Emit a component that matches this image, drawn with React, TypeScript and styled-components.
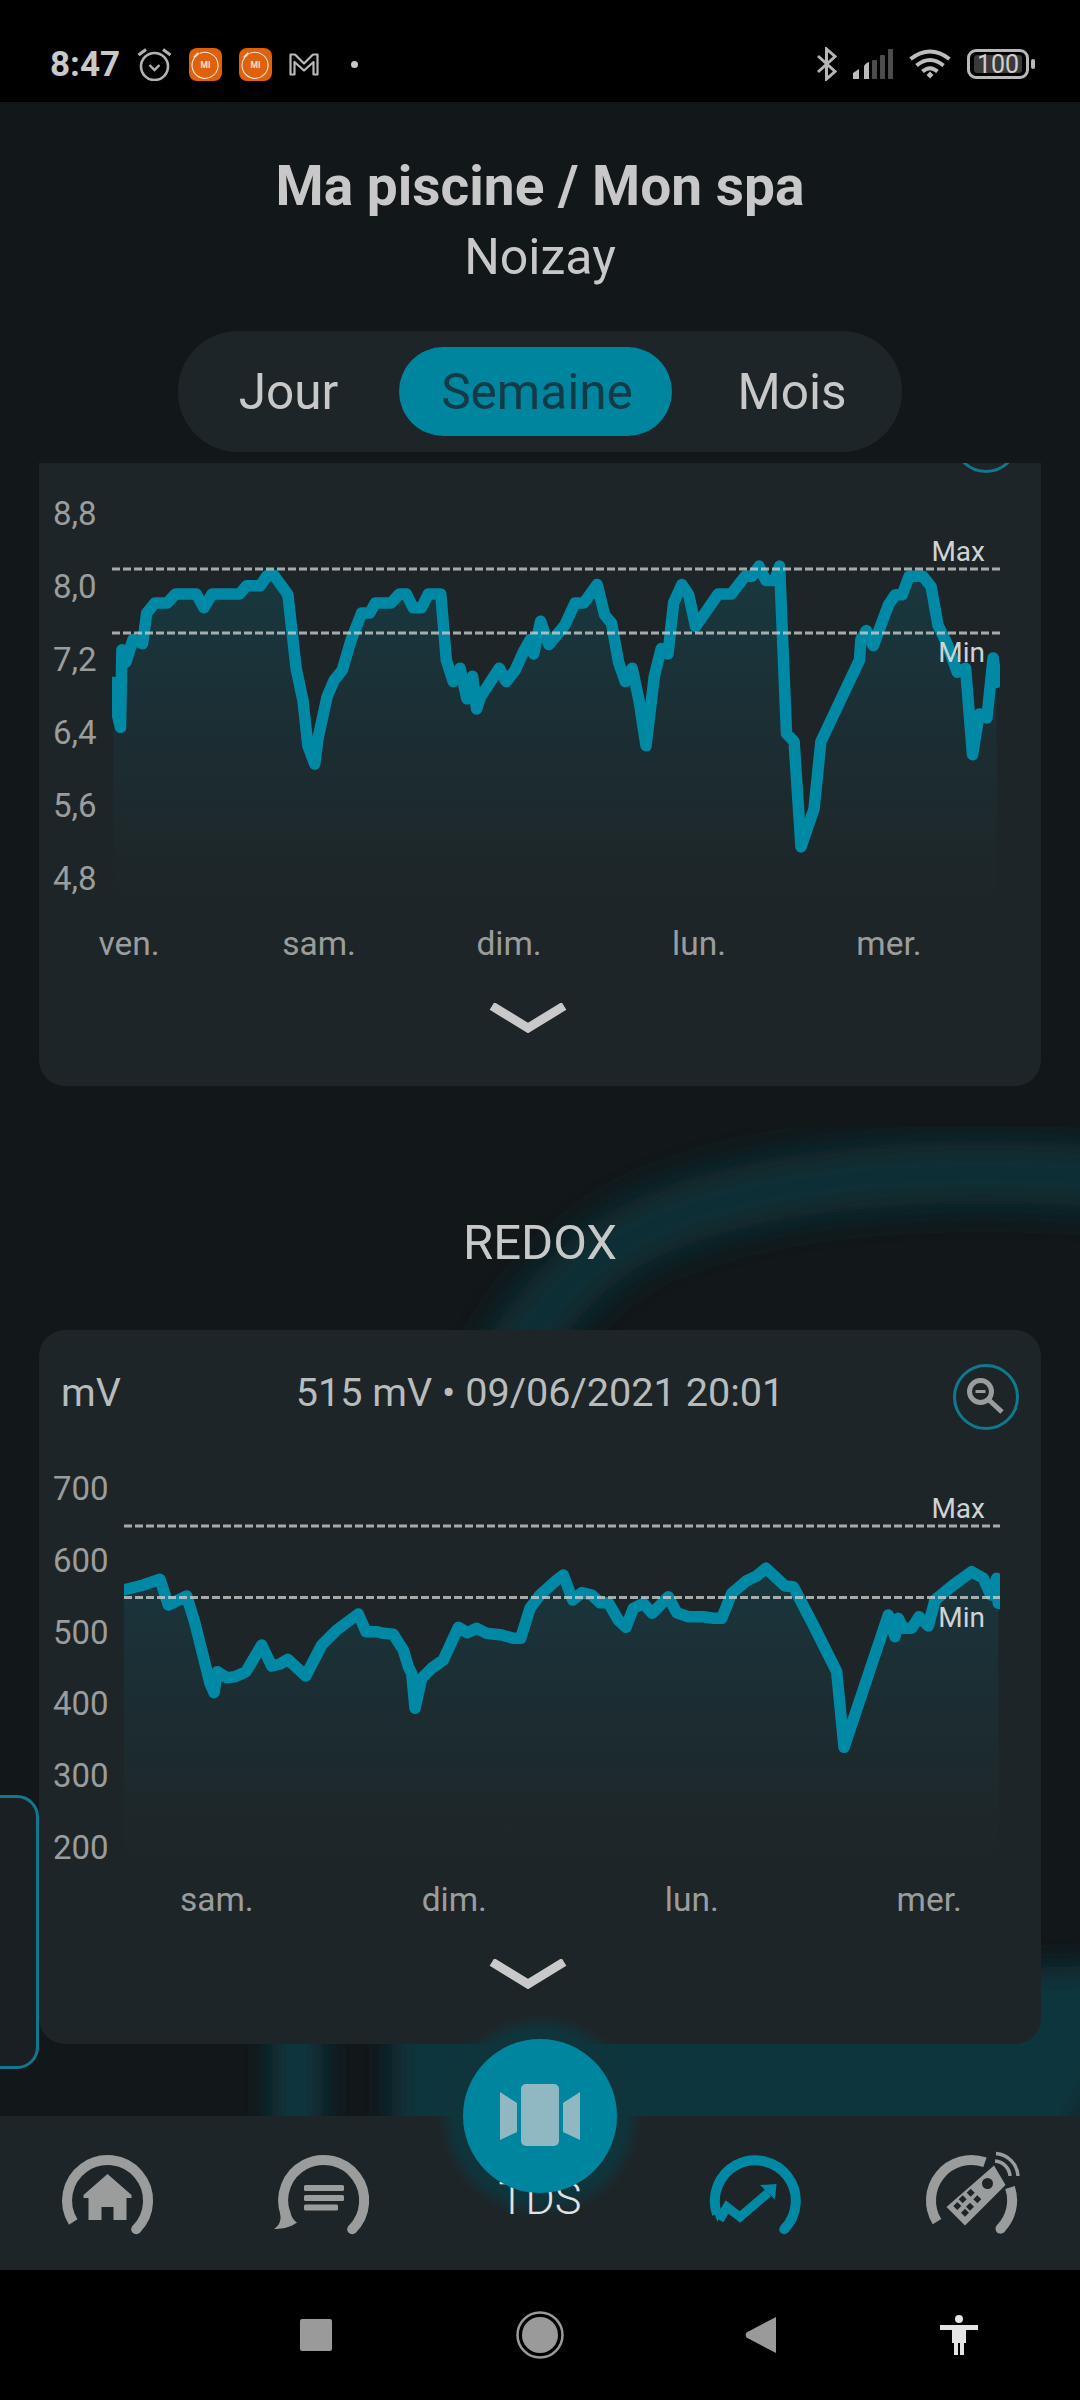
import React from "react";
import styled, { createGlobalStyle } from "styled-components";

const TEAL = "#00859f";
const CARD = "#1e2528";
const GREY = "#9b9d9d";
const FONT = `Roboto, "Liberation Sans", sans-serif`;

const Global = createGlobalStyle`
  html, body { margin: 0; padding: 0; background: #000; }
  body { font-family: ${FONT}; }
  * { box-sizing: border-box; }
`;

const Page = styled.div`
  width: 1080px;
  height: 2400px;
  display: flex;
  flex-direction: column;
  overflow: hidden;
  background: #000;
`;

/* ---------- status bar ---------- */
const StatusBar = styled.div`
  height: 102px;
  flex: none;
  background: #000;
  display: flex;
  align-items: center;
  justify-content: space-between;
  padding: 26px 45px 0 50px;
  color: #c9c9c9;
`;
const StatusGroup = styled.div<{ $gap: number }>`
  display: flex;
  align-items: center;
  gap: ${(p) => p.$gap}px;
`;
const Clock = styled.span`
  font-size: 35px;
  font-weight: 700;
  width: 70px;
`;
const Dot = styled.span`
  width: 7px;
  height: 7px;
  border-radius: 50%;
  background: #c9c9c9;
  margin-left: 15px;
`;

const AlarmIcon = () => (
  <svg width="35" height="34" viewBox="0 0 35 34" fill="none" stroke="#b3b3b3">
    <circle cx="17.5" cy="19.5" r="13.5" strokeWidth="2.6" />
    <path d="M1.5 8 L9 2.5 M33.5 8 L26 2.5" strokeWidth="3" />
    <path d="M12.5 18 L17.5 23 L22.5 18" strokeWidth="2.4" />
  </svg>
);
const MiIcon = () => (
  <svg width="33" height="33" viewBox="0 0 33 33">
    <rect width="33" height="33" rx="8" fill="#e0610d" />
    <path d="M10.5 5.6 A13 13 0 1 1 5.6 9.6" fill="none" stroke="#f6e3d5" strokeWidth="1.1" />
    <path d="M5 9.5 L9.5 5" stroke="#f6e3d5" strokeWidth="2.2" />
    <text x="16.5" y="20" textAnchor="middle" fontFamily={FONT} fontSize="8.5" fontWeight="700" fill="#f6e3d5">MI</text>
  </svg>
);
const MailIcon = () => (
  <svg width="30" height="23" viewBox="0 0 30 23" fill="none" stroke="#b8b8b8" strokeWidth="2.2" strokeLinejoin="round">
    <path d="M1.5 21.5 V1.5 H6 L15 10.5 L24 1.5 H28.5 V21.5 H24.5 V9 L15 17.5 L5.5 9 V21.5 Z" />
  </svg>
);
const BluetoothIcon = () => (
  <svg width="20" height="34" viewBox="0 0 20 34" fill="none" stroke="#b5b5b5" strokeWidth="3">
    <path d="M1 9 L18 24.5 L9.5 32 V2 L18 9.5 L1 25" />
  </svg>
);
const SignalIcon = () => (
  <svg width="40" height="30" viewBox="0 0 40 30">
    <path d="M0 30 V24 L6 20 V30 Z" fill="#bdbdbd" />
    <path d="M11 30 V18 Q11 15 16 13 V30 Z" fill="#bdbdbd" />
    <rect x="19" y="11" width="5" height="19" rx="1" fill="#4d4d4d" />
    <rect x="27" y="6" width="5" height="24" rx="1" fill="#4d4d4d" />
    <rect x="35" y="0" width="5" height="30" rx="1" fill="#4d4d4d" />
  </svg>
);
const WifiIcon = () => (
  <svg width="42" height="30" viewBox="0 0 42 30" fill="none" stroke="#bdbdbd" strokeWidth="4">
    <path d="M1.5 10 Q21 -5 40.5 10" />
    <path d="M7.5 16.5 Q21 5.5 34.5 16.5" />
    <path d="M13.5 22.5 Q21 16 28.5 22.5" />
    <path d="M17.5 26 L21 22.6 L24.5 26 L21 29.5 Z" fill="#bdbdbd" stroke="none" />
  </svg>
);
const Battery = styled.div`
  position: relative;
  width: 62px;
  height: 30px;
  margin-right: 6px;
  border: 3px solid #b9b9b9;
  border-radius: 9px;
  display: flex;
  align-items: center;
  justify-content: center;
  font-size: 25px;
  line-height: 1;
  color: #cfcfcf;
  &::before {
    content: "";
    position: absolute;
    inset: 3px 4px;
    border-radius: 3px;
    background: #3a3a3a;
  }
  &::after {
    content: "";
    position: absolute;
    right: -9px;
    top: 7px;
    width: 4px;
    height: 10px;
    border-radius: 2px;
    background: #b9b9b9;
  }
`;
const BatteryText = styled.span`
  position: relative;
`;

/* ---------- screen ---------- */
const Screen = styled.div`
  flex: 1;
  min-height: 0;
  position: relative;
  background: #12171a;
  display: flex;
  flex-direction: column;
`;
const Backdrop = styled.svg`
  position: absolute;
  left: 0;
  top: 0;
  pointer-events: none;
`;
const Header = styled.header`
  position: relative;
  flex: none;
  padding-top: 54px;
  text-align: center;
  color: #c8c8c8;
`;
const Title = styled.h1`
  margin: 0;
  font-size: 55px;
  line-height: 60px;
  font-weight: 700;
`;
const Subtitle = styled.div`
  margin-top: 11px;
  font-size: 50px;
  line-height: 60px;
  font-weight: 400;
`;
const Segmented = styled.div`
  width: 724px;
  height: 121px;
  margin: 44px auto 0;
  padding: 16px 0;
  border-radius: 60px;
  background: ${CARD};
  display: grid;
  grid-template-columns: 221px 273px 230px;
`;
const Segment = styled.div<{ $active?: boolean; $shift?: number }>`
  display: flex;
  align-items: center;
  justify-content: center;
  padding-left: ${(p) => p.$shift ?? 0}px;
  border-radius: 45px;
  font-size: 49.5px;
  color: ${(p) => (p.$active ? "#123a47" : "#c8c8c8")};
  background: ${(p) => (p.$active ? TEAL : "transparent")};
`;
const Scroll = styled.main`
  position: relative;
  flex: 1;
  min-height: 0;
  margin-top: 11px;
  overflow: hidden;
`;
const Card = styled.section<{ $pullUp?: number; $bottom: number }>`
  width: 1002px;
  margin: ${(p) => (p.$pullUp ? `-${p.$pullUp}px` : "0")} 0 0 39px;
  padding: 34px 22px ${(p) => p.$bottom}px 0;
  border-radius: 26px;
  background: ${CARD};
`;
const CardHead = styled.div`
  height: 64px;
  padding-left: 22px;
  display: grid;
  grid-template-columns: 1fr auto 1fr;
  align-items: center;
  font-size: 39.6px;
  color: #b9bcbd;
`;
const HeadText = styled.span`
  padding-bottom: 10px;
`;
const ZoomButton = styled.div`
  justify-self: end;
  width: 66px;
  height: 66px;
  border-radius: 50%;
  border: 3px solid #11788e;
  display: flex;
  align-items: center;
  justify-content: center;
`;
const ChartRow = styled.div`
  height: 420px;
  margin-top: 22px;
  padding-left: 14px;
  display: flex;
`;
const YAxis = styled.div<{ $top: number; $bottom: number }>`
  width: 47px;
  flex: none;
  padding: ${(p) => p.$top}px 0 ${(p) => p.$bottom}px;
  display: flex;
  flex-direction: column;
  justify-content: space-between;
  font-size: 33px;
  line-height: 40px;
  color: ${GREY};
  white-space: nowrap;
`;
const XAxis = styled.div<{ $start: number; $step: number; $top: number }>`
  margin: ${(p) => p.$top}px 0 0 ${(p) => p.$start}px;
  display: grid;
  grid-auto-flow: column;
  grid-auto-columns: ${(p) => p.$step}px;
  font-size: 33.5px;
  line-height: 40px;
  color: ${GREY};
  text-align: center;
`;
const Chevron = styled.svg`
  display: block;
  margin: 39px 0 0 450px;
`;
const SectionTitle = styled.h2`
  margin: 127px 0 57px;
  text-align: center;
  font-size: 49px;
  line-height: 60px;
  font-weight: 400;
  color: #c8c8c8;
`;
const SideTab = styled.div`
  position: absolute;
  left: -24px;
  top: 1693px;
  width: 63px;
  height: 274px;
  border: 3px solid #11788e;
  border-radius: 22px;
  background: #191f22;
`;

/* ---------- bottom nav ---------- */
const NavBar = styled.nav`
  position: relative;
  flex: none;
  height: 154px;
  padding-top: 34px;
  background: ${CARD};
  display: grid;
  grid-template-columns: repeat(5, 216px);
  justify-items: center;
  align-items: start;
`;
const NavGlow = styled.div`
  position: absolute;
  left: 438px;
  top: -102px;
  width: 204px;
  height: 204px;
  border-radius: 50%;
  background: radial-gradient(circle closest-side, #0f343c 0, #0f343c 84%, rgba(15, 52, 60, 0) 100%);
`;
const NavIcon = styled.svg`
  position: relative;
  display: block;
`;
const NavLabel = styled.span`
  position: relative;
  margin-top: 24px;
  font-size: 45px;
  font-weight: 300;
  line-height: 50px;
  color: #e2e2e2;
`;
const Fab = styled.div`
  position: absolute;
  left: 463px;
  top: -77px;
  width: 154px;
  height: 154px;
  border-radius: 50%;
  background: ${TEAL};
  display: flex;
  align-items: center;
  justify-content: center;
`;

/* ---------- system bar ---------- */
const SystemBar = styled.div`
  flex: none;
  height: 130px;
  background: #000;
  display: flex;
  align-items: center;
  padding: 0 0 0 300px;
`;
const SystemKey = styled.svg<{ $left?: number }>`
  display: block;
  margin-left: ${(p) => p.$left ?? 0}px;
`;

/* ---------- chart ---------- */
type Pt = [number, number];

const phRaw: Pt[] = [[165,545],[167,600],[175,655],[177,465],[183,495],[193,440],[207,450],[213,375],[225,350],[243,350],[255,328],[285,328],[296,362],[308,328],[348,328],[358,308],[378,308],[388,283],[398,283],[418,330],[430,510],[440,590],[447,700],[457,745],[462,680],[475,580],[485,540],[497,515],[510,440],[525,375],[537,375],[545,350],[568,350],[580,328],[590,328],[600,362],[612,362],[622,328],[640,328],[648,490],[658,543],[668,510],[678,585],[686,530],[692,610],[698,580],[725,510],[735,543],[748,515],[760,470],[770,440],[775,475],[785,395],[797,452],[820,405],[835,350],[848,350],[867,305],[878,380],[888,400],[898,495],[908,543],[918,510],[928,590],[938,700],[950,530],[960,462],[970,475],[978,350],[990,305],[1000,330],[1010,408],[1043,328],[1062,328],[1082,285],[1092,285],[1102,260],[1112,295],[1125,295],[1132,260],[1142,670],[1153,690],[1163,948],[1182,855],[1192,690],[1248,490],[1250,440],[1258,418],[1268,455],[1290,355],[1300,330],[1310,330],[1320,285],[1340,285],[1352,310],[1362,405],[1375,450],[1390,520],[1402,510],[1412,722],[1422,622],[1433,632],[1442,485],[1447,545]];
const phPoints: Pt[] = phRaw.map(([x, y]) => [x / 1.452, 460 + y / 2.45]);

const redoxA: Pt[] = [[40,120],[100,105],[150,88],[175,165],[230,138],[255,220],[285,340],[300,400],[312,428],[322,365],[350,383],[375,380],[408,365],[455,285],[485,348],[510,342],[533,328],[587,378],[635,285],[680,240],[745,192],[768,245],[800,245],[820,250],[850,253],[880,300],[895,350],[905,370],[915,475],[935,385],[965,355],[1000,330],[1045,232],[1072,248],[1100,235],[1130,250],[1175,255],[1210,265],[1232,265],[1260,175],[1290,135],[1340,90]];
const redoxB: Pt[] = [[10,75],[38,150],[65,128],[95,135],[120,158],[145,158],[175,210],[198,232],[220,175],[250,160],[277,190],[325,140],[350,188],[385,200],[430,200],[460,205],[485,205],[515,130],[560,92],[590,78],[618,55],[675,108],[700,110],[760,225],[830,365],[852,592],[985,195],[1005,260],[1015,205],[1030,235],[1055,235],[1077,200],[1105,228],[1125,150],[1180,105],[1235,65],[1270,85],[1292,135],[1310,85],[1315,160]];
const redoxPoints: Pt[] = [
  ...redoxA.map(([x, y]): Pt => [110 + x / 3, 1550 + y / 3]),
  ...redoxB.map(([x, y]): Pt => [560 + x / 3, 1550 + y / 3]),
];

const PLOT_W = 910;
const PLOT_H = 420;

function Plot(props: { id: string; points: Pt[]; top: number; left: number; maxY: number; minY: number; maxLabelY: number; minLabelY: number }) {
  const { id, points, top, left, maxY, minY, maxLabelY, minLabelY } = props;
  const pts = points.map(([x, y]) => [x - 100, y - top] as Pt);
  const line = pts.map(([x, y]) => `${x.toFixed(1)},${y.toFixed(1)}`).join(" ");
  const x0 = left - 100;
  const x1 = 900;
  const area = `M${pts[0][0].toFixed(1)} ${PLOT_H} L${line.replace(/ /g, " L")} L${pts[pts.length - 1][0].toFixed(1)} ${PLOT_H} Z`;
  const my = maxY - top;
  const ny = minY - top;
  return (
    <svg width={PLOT_W} height={PLOT_H} viewBox={`0 0 ${PLOT_W} ${PLOT_H}`} style={{ display: "block", flex: "none" }}>
      <defs>
        <linearGradient id={`${id}-fill`} gradientUnits="userSpaceOnUse" x1="0" y1={my} x2="0" y2={PLOT_H - 8}>
          <stop offset="0" stopColor={TEAL} stopOpacity="0.2" />
          <stop offset="0.5" stopColor={TEAL} stopOpacity="0.09" />
          <stop offset="1" stopColor={TEAL} stopOpacity="0" />
        </linearGradient>
        <clipPath id={`${id}-clip`}>
          <rect x={x0} y="0" width={x1 - x0} height={PLOT_H} />
        </clipPath>
      </defs>
      <g clipPath={`url(#${id}-clip)`}>
        <path d={area} fill={`url(#${id}-fill)`} />
        <polyline points={line} fill="none" stroke="#0089a5" strokeWidth="11.5" strokeLinejoin="round" strokeLinecap="round" />
      </g>
      <path d={`M${x0} ${my} H${x1} M${x0} ${ny} H${x1}`} stroke="#c9cccc" strokeOpacity="0.8" strokeWidth="3" strokeDasharray="8 3" />
      <text x="885" y={maxLabelY - top + 10} textAnchor="end" fontFamily={FONT} fontSize="28" fill="#d0d3d4">Max</text>
      <text x="885" y={minLabelY - top + 10} textAnchor="end" fontFamily={FONT} fontSize="28" fill="#d0d3d4">Min</text>
    </svg>
  );
}

const ChevronDown = () => (
  <Chevron width="78" height="30" viewBox="0 0 78 30" fill="none">
    <path d="M3 3 L39 25 L75 3" stroke="#c9c9c9" strokeWidth="9" strokeLinejoin="miter" />
  </Chevron>
);

const ZoomOutIcon = () => (
  <svg width="44" height="44" viewBox="0 0 44 44" fill="none" stroke="#9b9d9d">
    <circle cx="16.5" cy="16.5" r="11" strokeWidth="5" />
    <path d="M11.5 16.5 H21.5" strokeWidth="3" />
    <path d="M25 25 L38 37" strokeWidth="5" />
  </svg>
);

/* ---------- nav icons ---------- */
const Ring = ({ color, d, capX, capY }: { color: string; d: string; capX: number; capY: number }) => (
  <>
    <path d={d} fill="none" stroke={color} strokeWidth="10" />
    <circle cx={capX} cy={capY} r="5" fill={color} />
  </>
);

const HomeIcon = () => (
  <NavIcon width="100" height="85" viewBox="1 0 100 85">
    <Ring color={GREY} d="M16.2 72 A40.5 40.5 0 1 1 79.2 79.2" capX={79.2} capY={79.2} />
    <path fill={GREY} d="M50.5 24 L74.5 45 V48 H69.5 V70 H56.5 V57 H44.5 V70 H31.5 V48 H26.5 V45 Z" />
  </NavIcon>
);
const ChatIcon = () => (
  <NavIcon width="100" height="85" viewBox="1 0 100 85">
    <Ring color={GREY} d="M12.5 64 A40.5 40.5 0 1 1 79.2 79.2" capX={79.2} capY={79.2} />
    <path fill={GREY} d="M7 62 C8.5 70 7 75 1 79 C10 79 18 77 24 72.5 C20 70 18 66 17 60 Z" />
    <rect x="31" y="35" width="40" height="6" rx="1.5" fill={GREY} />
    <rect x="31" y="45" width="40" height="6" rx="1.5" fill={GREY} />
    <rect x="31" y="54.5" width="34" height="6" rx="1.5" fill={GREY} />
  </NavIcon>
);
const TrendIcon = () => (
  <NavIcon width="100" height="85" viewBox="1 0 100 85">
    <Ring color="#0089a5" d="M12 64 A40.5 40.5 0 1 1 79.2 79.2" capX={79.2} capY={79.2} />
    <path d="M14.5 70 L22 57 L35 67 L63 43" fill="none" stroke="#0089a5" strokeWidth="9" />
    <path d="M55 35 L71.5 34 L70 49.5 Z" fill="#0089a5" />
    <path d="M12.3 72 L8 58 L18 60 Z" fill="#0089a5" />
  </NavIcon>
);
const RemoteIcon = () => (
  <NavIcon width="100" height="85" viewBox="0 0 100 85">
    <path d="M15 71.7 A40.5 40.5 0 0 1 63 12.3" fill="none" stroke={GREY} strokeWidth="10" />
    <path d="M88 37.5 A40.5 40.5 0 0 1 78.5 78.8" fill="none" stroke={GREY} strokeWidth="10" />
    <circle cx="78.5" cy="78.8" r="5" fill={GREY} />
    <path d="M72 15.5 L83.5 35 L43 75.5 L24.5 57 Z" fill={GREY} stroke={CARD} strokeWidth="4" strokeLinejoin="round" paintOrder="stroke" />
    <circle cx="65.5" cy="33.5" r="5.5" fill={CARD} />
    {[[48.7,42.7],[55.3,49.3],[40.7,49.3],[48,56.7],[35.3,56],[43,62.7]].map(([x, y]) => (
      <path key={`${x}-${y}`} d={`M${x} ${y - 4} L${x + 4} ${y} L${x} ${y + 4} L${x - 4} ${y} Z`} fill={CARD} />
    ))}
    <path d="M73 11 A16 16 0 0 1 88 26 M74 3.5 A24 24 0 0 1 96 26" fill="none" stroke={GREY} strokeWidth="3.5" />
  </NavIcon>
);
const PanelsIcon = () => (
  <svg width="80" height="64" viewBox="0 0 80 64" fill="#8fb8c3">
    <rect x="21" y="0" width="38" height="62" rx="5" />
    <path d="M0 8 L17 19 V48 L0 56 Z" />
    <path d="M80 8 L63 19 V48 L80 56 Z" />
  </svg>
);

export default function App() {
  return (
    <Page>
      <Global />
      <StatusBar>
        <StatusGroup $gap={17}>
          <Clock>8:47</Clock>
          <AlarmIcon />
          <MiIcon />
          <MiIcon />
          <MailIcon />
          <Dot />
        </StatusGroup>
        <StatusGroup $gap={16}>
          <BluetoothIcon />
          <SignalIcon />
          <WifiIcon />
          <Battery>
            <BatteryText>100</BatteryText>
          </Battery>
        </StatusGroup>
      </StatusBar>

      <Screen>
        <Backdrop width="1080" height="2168" viewBox="0 102 1080 2168" fill="none">
          <defs>
            <filter id="soft" x="-20%" y="-20%" width="140%" height="140%">
              <feGaussianBlur stdDeviation="15" />
            </filter>
            <filter id="softer" x="-20%" y="-20%" width="140%" height="140%">
              <feGaussianBlur stdDeviation="19" />
            </filter>
          </defs>
          <path filter="url(#softer)" d="M1150 1182 C 960 1160, 730 1175, 620 1243 C 570 1275, 530 1320, 490 1400" stroke="#0e3239" strokeWidth="62" />
          <g filter="url(#soft)">
            <path d="M297 1990 L297 2150" stroke="#0e3840" strokeWidth="50" />
            <path d="M392 2160 L392 1990 L1120 1965 L1120 2045 L1060 2160 Z" fill="#0f363e" />
          </g>
        </Backdrop>

        <Header>
          <Title>Ma piscine / Mon spa</Title>
          <Subtitle>Noizay</Subtitle>
          <Segmented>
            <Segment>Jour</Segment>
            <Segment $active $shift={3}>Semaine</Segment>
            <Segment $shift={10}>Mois</Segment>
          </Segmented>
        </Header>

        <Scroll>
          <Card $pullUp={90} $bottom={53}>
            <CardHead>
              <HeadText />
              <HeadText />
              <ZoomButton>
                <ZoomOutIcon />
              </ZoomButton>
            </CardHead>
            <ChartRow>
              <YAxis $top={1} $bottom={14}>
                <span>8,8</span>
                <span>8,0</span>
                <span>7,2</span>
                <span>6,4</span>
                <span>5,6</span>
                <span>4,8</span>
              </YAxis>
              <Plot id="ph" points={phPoints} top={493} left={112} maxY={569} minY={633} maxLabelY={551} minLabelY={652} />
            </ChartRow>
            <XAxis $start={-5} $step={190} $top={11}>
              <span>ven.</span>
              <span>sam.</span>
              <span>dim.</span>
              <span>lun.</span>
              <span>mer.</span>
            </XAxis>
            <ChevronDown />
          </Card>

          <SectionTitle>REDOX</SectionTitle>

          <Card $bottom={55}>
            <CardHead>
              <HeadText>mV</HeadText>
              <HeadText>515 mV • 09/06/2021 20:01</HeadText>
              <ZoomButton>
                <ZoomOutIcon />
              </ZoomButton>
            </CardHead>
            <ChartRow>
              <YAxis $top={19} $bottom={2}>
                <span>700</span>
                <span>600</span>
                <span>500</span>
                <span>400</span>
                <span>300</span>
                <span>200</span>
              </YAxis>
              <Plot id="redox" points={redoxPoints} top={1450} left={124} maxY={1526} minY={1597.5} maxLabelY={1508} minLabelY={1617} />
            </ChartRow>
            <XAxis $start={59} $step={237.5} $top={10}>
              <span>sam.</span>
              <span>dim.</span>
              <span>lun.</span>
              <span>mer.</span>
            </XAxis>
            <ChevronDown />
          </Card>
        </Scroll>

        <SideTab />

        <NavBar>
          <NavGlow />
          <HomeIcon />
          <ChatIcon />
          <NavLabel>TDS</NavLabel>
          <TrendIcon />
          <RemoteIcon />
          <Fab>
            <PanelsIcon />
          </Fab>
        </NavBar>
      </Screen>

      <SystemBar>
        <SystemKey width="32" height="32" viewBox="0 0 32 32">
          <rect width="32" height="32" rx="2" fill="#9a9a9a" />
        </SystemKey>
        <SystemKey $left={184} width="48" height="48" viewBox="0 0 48 48">
          <circle cx="24" cy="24" r="22.5" fill="none" stroke="#9a9a9a" strokeWidth="2.5" />
          <circle cx="24" cy="24" r="18" fill="#9a9a9a" />
        </SystemKey>
        <SystemKey $left={181} width="31" height="36" viewBox="0 0 31 36">
          <path d="M31 0 V36 L1.5 20.5 Q0 18 1.5 15.5 Z" fill="#9a9a9a" />
        </SystemKey>
        <SystemKey $left={164} width="38" height="40" viewBox="0 0 38 40" fill="#e4e4e4">
          <circle cx="19" cy="4" r="4" />
          <rect x="0" y="10" width="38" height="5" />
          <path d="M12 15 H26 V28 H24 V40 H20 V28 H18 V40 H14 V28 H12 Z" />
        </SystemKey>
      </SystemBar>
    </Page>
  );
}
